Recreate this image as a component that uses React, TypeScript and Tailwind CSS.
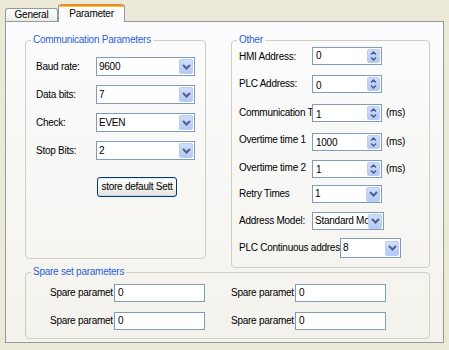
import React from 'react';

const font = 'font-["Liberation_Sans",Arial,sans-serif]';

function ArrowDown() {
  return (
    <svg width="9" height="6" viewBox="0 0 9 6" className="block">
      <path d="M1 1 L4.5 4.5 L8 1" fill="none" stroke="#4d6185" strokeWidth="2" />
    </svg>
  );
}

function Combo({ value, width, height = 'h-[19px]' }: { value: string; width: string; height?: string }) {
  return (
    <div className={`${width} ${height} flex items-center border border-[#7f9db9] bg-white`}>
      <span className="flex-1 overflow-hidden whitespace-nowrap pl-[2px]">{value}</span>
      <div className="mr-px flex h-[15px] w-[14px] shrink-0 items-center justify-center rounded-[2px] border border-[#b9cdf7] bg-gradient-to-b from-[#d0defc] to-[#b4c8f6]">
        <ArrowDown />
      </div>
    </div>
  );
}

function Spin({ value, textPad = '' }: { value: string; textPad?: string }) {
  return (
    <div className="flex h-[18px] w-[70px] items-stretch border border-[#7f9db9] bg-white">
      <span className={`flex-1 self-center pl-[3px] ${textPad}`}>{value}</span>
      <div className="my-px mr-px flex w-[13px] flex-col items-center justify-center gap-[2px] rounded-[2px] border border-[#b9cdf7] bg-gradient-to-b from-[#d0defc] to-[#b4c8f6]">
        <svg width="7" height="4" viewBox="0 0 7 4" className="block">
          <path d="M1 3.5 L3.5 1 L6 3.5" fill="none" stroke="#4d6185" strokeWidth="1.5" />
        </svg>
        <svg width="7" height="4" viewBox="0 0 7 4" className="block">
          <path d="M1 0.5 L3.5 3 L6 0.5" fill="none" stroke="#4d6185" strokeWidth="1.5" />
        </svg>
      </div>
    </div>
  );
}

function TextBox({ value }: { value: string }) {
  return (
    <div className="flex h-[18px] w-[91px] items-center border border-[#7f9db9] bg-white pl-[3px]">{value}</div>
  );
}

function Legend({ children }: { children: React.ReactNode }) {
  return <legend className="ml-[5px] px-[2px] leading-[12px] text-[#2a5fd8]">{children}</legend>;
}

const commRows = [
  { label: 'Baud rate:', value: '9600' },
  { label: 'Data bits:', value: '7' },
  { label: 'Check:', value: 'EVEN' },
  { label: 'Stop Bits:', value: '2' },
];

export default function App() {
  return (
    <div className={`h-[350px] w-[449px] bg-[#ece9d8] text-[10px] leading-[12px] tracking-[-0.25px] text-black ${font}`}>
      {/* tabs */}
      <div className="flex h-[21px] items-end pl-[5px]">
        <div className="flex h-[13px] w-[53px] items-center justify-center rounded-t-[3px] border border-b-0 border-[#919b9c] bg-gradient-to-b from-white to-[#ecebe6]">
          General
        </div>
        <div className="relative z-10 -mb-px flex h-[18px] w-[67px] flex-col rounded-t-[3px] border-x border-[#919b9c] bg-[#fcfcfe]">
          <div className="h-[3px] rounded-t-[3px] border-t-2 border-[#e68b2c] bg-[#ffc73c]" />
          <div className="flex flex-1 items-center justify-center pb-[1px]">Parameter</div>
        </div>
      </div>

      {/* panel */}
      <div className="ml-[5px] h-[322px] w-[439px] border border-[#919b9c] bg-gradient-to-b from-[#fcfcfe] to-[#f3f2ec] pl-[19px] pt-[12px]">
        <div className="flex items-start gap-[25px]">
          <fieldset className="h-[225px] w-[181px] rounded-[4px] border border-[#d0d0bf]">
            <Legend>Communication Parameters</Legend>
            <div className="mt-[11px] flex flex-col gap-[9px] pl-[10px]">
              {commRows.map((r) => (
                <div key={r.label} className="flex h-[19px] items-center">
                  <span className="w-[60px]">{r.label}</span>
                  <Combo value={r.value} width="w-[99px]" />
                </div>
              ))}
            </div>
            <div className="ml-[71px] mt-[17px] flex h-[20px] w-[80px] items-center justify-center overflow-hidden whitespace-nowrap rounded-[3px] border border-[#003c74] bg-gradient-to-b from-white to-[#e6e5de] shadow-[inset_0_-1px_0_#c6d3e8,inset_0_1px_0_#e0e8f8]">
              store default Sett
            </div>
          </fieldset>

          <fieldset className="h-[234px] w-[199px] rounded-[4px] border border-[#d0d0bf]">
            <Legend>Other</Legend>
            <div className="flex flex-col pl-[7px]">
              <div className="mt-px flex h-[18px] items-center">
                <span className="w-[73px] overflow-hidden whitespace-nowrap pt-[2px]">HMI Address:</span>
                <Spin value="0" />
              </div>
              <div className="mt-[10px] flex h-[18px] items-center">
                <span className="w-[73px] overflow-hidden whitespace-nowrap">PLC Address:</span>
                <Spin value="0" textPad="pt-[4px]" />
              </div>
              <div className="mt-[11px] flex h-[18px] items-center">
                <span className="w-[73px] overflow-hidden whitespace-nowrap">Communication T</span>
                <Spin value="1" textPad="pt-[4px]" />
                <span className="ml-[4px]">(ms)</span>
              </div>
              <div className="mt-[11px] flex h-[18px] items-center">
                <span className="w-[73px] overflow-hidden whitespace-nowrap pb-[4px]">Overtime time 1</span>
                <Spin value="1000" textPad="pt-[1px]" />
                <span className="ml-[4px]">(ms)</span>
              </div>
              <div className="mt-[9px] flex h-[18px] items-center">
                <span className="w-[73px] overflow-hidden whitespace-nowrap pb-[2px]">Overtime time 2</span>
                <Spin value="1" textPad="pt-[2px]" />
                <span className="ml-[4px]">(ms)</span>
              </div>
              <div className="mt-[7px] flex h-[18px] items-center">
                <span className="w-[73px] overflow-hidden whitespace-nowrap">Retry Times</span>
                <Combo value="1" width="w-[70px]" height="h-[18px]" />
              </div>
              <div className="mt-[9px] flex h-[18px] items-center">
                <span className="w-[73px] overflow-hidden whitespace-nowrap">Address Model:</span>
                <Combo value="Standard Mode" width="w-[72px]" height="h-[18px]" />
              </div>
              <div className="mt-[8px] flex h-[20px] items-center">
                <span className="w-[101px] overflow-hidden whitespace-nowrap">PLC Continuous addres</span>
                <Combo value="8" width="w-[61px]" height="h-[20px]" />
              </div>
            </div>
          </fieldset>
        </div>

        <fieldset className="-mt-[2px] h-[73px] w-[405px] rounded-[4px] border border-[#d0d0bf]">
          <Legend>Spare set parameters</Legend>
          <div className="mt-[6px] grid grid-cols-[155px_155px] gap-x-[26px] gap-y-[10px] pl-[24px]">
            {['0', '0', '0', '0'].map((v, i) => (
              <div key={i} className="flex h-[18px] items-center">
                <span className="w-[64px] overflow-hidden whitespace-nowrap">Spare paramet</span>
                <TextBox value={v} />
              </div>
            ))}
          </div>
        </fieldset>
      </div>
    </div>
  );
}
